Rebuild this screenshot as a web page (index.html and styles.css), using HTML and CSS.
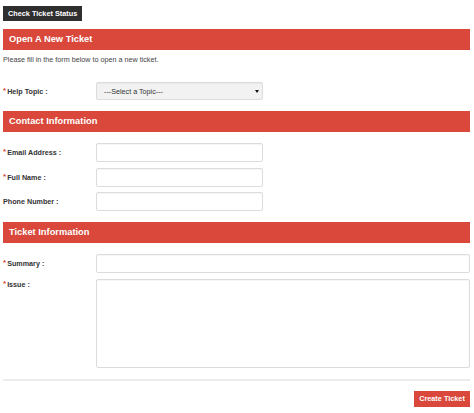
FILE: index.html
```html
<!DOCTYPE html>
<html lang="en">
<head>
  <meta charset="UTF-8" />
  <meta name="viewport" content="width=device-width, initial-scale=1.0" />
  <title>Support - Open A New Ticket</title>
  <link rel="stylesheet" href="styles.css">
</head>
<body>
  <div class="page">
    <button class="status-btn">Check Ticket Status</button>

    <div class="section-title first">Open A New Ticket</div>
    <p class="intro">Please fill in the form below to open a new ticket.</p>

    <div class="row topic-row">
      <label class="req" for="topic">Help Topic :</label>
      <div class="select-wrap">
        <select id="topic">
          <option>---Select a Topic---</option>
          <option>General Inquiry</option>
          <option>Billing</option>
          <option>Technical Support</option>
        </select>
      </div>
    </div>

    <div class="section-title">Contact Information</div>
    <div class="fields">
      <div class="row">
        <label class="req" for="email">Email Address :</label>
        <input type="text" id="email" class="short" />
      </div>
      <div class="row">
        <label class="req" for="name">Full Name :</label>
        <input type="text" id="name" class="short" />
      </div>
      <div class="row">
        <label for="phone">Phone Number :</label>
        <input type="text" id="phone" class="short" />
      </div>
    </div>

    <div class="section-title">Ticket Information</div>
    <div class="fields">
      <div class="row">
        <label class="req" for="summary">Summary :</label>
        <input type="text" id="summary" class="wide" />
      </div>
      <div class="row top">
        <label class="req" for="issue">Issue :</label>
        <textarea id="issue"></textarea>
      </div>
    </div>

    <hr class="divider" />

    <div class="actions">
      <button class="create-btn">Create Ticket</button>
    </div>
  </div>
</body>
</html>
```

FILE: styles.css
```css
body {
  margin: 0;
  padding: 0;
  background: #fff;
  color: #333;
  font-family: 'Liberation Sans', Arial, sans-serif;
}
.page {
  padding: 6px 4px 0 3px;
}
.status-btn {
  display: block;
  height: 15px;
  padding: 0 5px;
  border: none;
  background-color: #2f2f2f;
  color: #fff;
  font-family: 'Liberation Sans', Arial, sans-serif;
  font-size: 7.3px;
  font-weight: bold;
}
.section-title {
  margin-top: 11px;
  height: 21px;
  line-height: 21px;
  padding-left: 6px;
  background-color: #d9483a;
  color: #fff;
  font-size: 9.3px;
  font-weight: bold;
}
.section-title.first {
  margin-top: 8px;
}
.intro {
  margin: 5px 0 0;
  line-height: 10px;
  font-size: 7.2px;
  color: #444;
}
.row {
  display: flex;
  align-items: center;
}
.row.top {
  align-items: flex-start;
}
.topic-row {
  margin-top: 17px;
}
.fields {
  display: flex;
  flex-direction: column;
  gap: 5.5px;
  margin-top: 11px;
}
label {
  width: 93px;
  flex-shrink: 0;
  font-size: 7.2px;
  font-weight: bold;
  color: #333;
}
.row.top label {
  padding-top: 1px;
  line-height: 9px;
}
label.req::before {
  content: "*";
  color: #d9483a;
  font-size: 8px;
  position: relative;
  top: -1px;
  margin-right: 1px;
}
input[type="text"], textarea, select {
  box-sizing: border-box;
  margin: 0;
  border: 1px solid #dcdcdc;
  border-radius: 2px;
  box-shadow: inset 0 1px 1px rgba(0, 0, 0, 0.04);
  background: #fff;
  font-family: 'Liberation Sans', Arial, sans-serif;
  font-size: 7.2px;
}
input.short {
  width: 167px;
  height: 19px;
}
input.wide {
  flex: 1;
  height: 19px;
}
textarea {
  flex: 1;
  height: 89px;
  resize: none;
}
.select-wrap {
  position: relative;
  width: 167px;
}
.select-wrap::after {
  content: "";
  position: absolute;
  right: 4px;
  top: 8px;
  border-left: 2px solid transparent;
  border-right: 2px solid transparent;
  border-top: 3px solid #111;
  pointer-events: none;
}
select {
  appearance: none;
  -webkit-appearance: none;
  display: block;
  width: 100%;
  height: 18px;
  padding: 0 0 0 7px;
  background-color: #f2f2f2;
  color: #333;
}
.divider {
  margin: 11px 0 0;
  border: none;
  height: 2px;
  background-color: #ececec;
}
.actions {
  display: flex;
  justify-content: flex-end;
  margin-top: 10px;
}
.create-btn {
  height: 16px;
  width: 56px;
  padding: 0;
  border: none;
  background-color: #d9483a;
  color: #fff;
  font-family: 'Liberation Sans', Arial, sans-serif;
  font-size: 7.3px;
  font-weight: bold;
}
```
